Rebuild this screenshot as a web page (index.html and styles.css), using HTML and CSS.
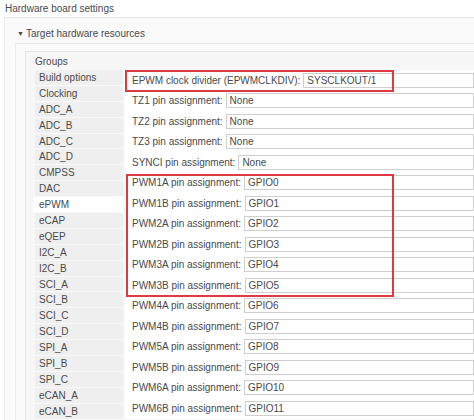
FILE: index.html
```html
<!DOCTYPE html>
<html lang="en">
<head>
    <meta charset="UTF-8">
    <title>Hardware board settings</title>
    <link rel="stylesheet" href="styles.css">
</head>
<body>

    <div class="title">Hardware board settings</div>
    <div class="panel">
        <div class="section-head"><span class="caret">&#9660;</span>Target hardware resources</div>
        <div class="section-body">
            <div class="groups">
                <div class="groups-label">Groups</div>
                <div class="groups-content">
                    <ul class="group-list">
                        <li>Build options</li>
                        <li>Clocking</li>
                        <li>ADC_A</li>
                        <li>ADC_B</li>
                        <li>ADC_C</li>
                        <li>ADC_D</li>
                        <li>CMPSS</li>
                        <li>DAC</li>
                        <li class="selected">ePWM</li>
                        <li>eCAP</li>
                        <li>eQEP</li>
                        <li>I2C_A</li>
                        <li>I2C_B</li>
                        <li>SCI_A</li>
                        <li>SCI_B</li>
                        <li>SCI_C</li>
                        <li>SCI_D</li>
                        <li>SPI_A</li>
                        <li>SPI_B</li>
                        <li>SPI_C</li>
                        <li>eCAN_A</li>
                        <li>eCAN_B</li>
                    </ul>

                    <div class="form">
                        <div class="row"><label>EPWM clock divider (EPWMCLKDIV):</label><div class="field">SYSCLKOUT/1</div></div>
                        <div class="row"><label>TZ1 pin assignment:</label><div class="field">None</div></div>
                        <div class="row"><label>TZ2 pin assignment:</label><div class="field">None</div></div>
                        <div class="row"><label>TZ3 pin assignment:</label><div class="field">None</div></div>
                        <div class="row"><label>SYNCI pin assignment:</label><div class="field">None</div></div>
                        <div class="row"><label>PWM1A pin assignment:</label><div class="field">GPIO0</div></div>
                        <div class="row"><label>PWM1B pin assignment:</label><div class="field">GPIO1</div></div>
                        <div class="row"><label>PWM2A pin assignment:</label><div class="field">GPIO2</div></div>
                        <div class="row"><label>PWM2B pin assignment:</label><div class="field">GPIO3</div></div>
                        <div class="row"><label>PWM3A pin assignment:</label><div class="field">GPIO4</div></div>
                        <div class="row"><label>PWM3B pin assignment:</label><div class="field">GPIO5</div></div>
                        <div class="row"><label>PWM4A pin assignment:</label><div class="field">GPIO6</div></div>
                        <div class="row"><label>PWM4B pin assignment:</label><div class="field">GPIO7</div></div>
                        <div class="row"><label>PWM5A pin assignment:</label><div class="field">GPIO8</div></div>
                        <div class="row"><label>PWM5B pin assignment:</label><div class="field">GPIO9</div></div>
                        <div class="row"><label>PWM6A pin assignment:</label><div class="field">GPIO10</div></div>
                        <div class="row"><label>PWM6B pin assignment:</label><div class="field">GPIO11</div></div>

                        <!-- red annotation boxes -->
                        <div class="mark mark-clock"></div>
                        <div class="mark mark-pwm"></div>
                    </div>
                </div>
            </div>
        </div>
    </div>

</body>
</html>
```

FILE: styles.css
```css
body {
    margin: 0;
    width: 474px;
    height: 420px;
    overflow: hidden;
    background-color: #fff;
    font-family: "Liberation Sans", Arial, sans-serif;
    font-size: 10px;
    color: #4a4a4a;
}
.title {
    height: 17px;
    line-height: 17px;
    padding-left: 5px;
}
.panel {
    margin-left: 4px;
    border-top: 1px solid #e6e6e6;
    border-left: 1px solid #ebebeb;
    background-color: #fafafa;
}
.section-head {
    height: 25px;
    line-height: 12px;
    padding-top: 10px;
    padding-left: 12px;
    box-sizing: border-box;
}
.caret {
    font-size: 7px;
    margin-right: 2px;
    vertical-align: 1px;
}
.section-body {
    margin-left: 10px;
    padding-top: 7px;
    border-top: 1px solid #e6e6e6;
    border-left: 1px solid #ebebeb;
}
.groups {
    margin-left: 9px;
    border-top: 1px solid #e3e3e3;
    border-left: 1px solid #e6e6e6;
    background-color: #f7f7f7;
}
.groups-label {
    height: 18px;
    line-height: 20px;
    padding-left: 9px;
}
.groups-content {
    display: flex;
    align-items: flex-start;
    padding-left: 9px;
}
.group-list {
    list-style: none;
    margin: 0;
    padding: 0;
    width: 88px;
    flex-shrink: 0;
    background-color: #efefef;
}
.group-list li {
    height: 15.9px;
    line-height: 15px;
    padding-left: 4px;
    border-bottom: 1px solid #fafafa;
    box-sizing: border-box;
}
.group-list li.selected {
    background-color: #fff;
    margin-left: -2px;
    padding-left: 6px;
}
.form {
    position: relative;
    flex: 1;
    margin-left: 2px;
    background-color: #fff;
}
.row {
    display: flex;
    align-items: center;
    height: 20.5px;
    padding-left: 7px;
}
.row label {
    white-space: nowrap;
    margin-right: 3px;
}
.field {
    flex: 1;
    height: 15px;
    line-height: 13px;
    padding-left: 3px;
    border: 1px solid #cfcfcf;
    box-sizing: border-box;
    background-color: #fff;
}
.mark {
    position: absolute;
    border: 2px solid #de3a44;
    box-sizing: border-box;
}
.mark-clock {
    left: 0;
    top: 0;
    width: 269px;
    height: 22px;
}
.mark-pwm {
    left: 1px;
    top: 104px;
    width: 268px;
    height: 123px;
}
```
